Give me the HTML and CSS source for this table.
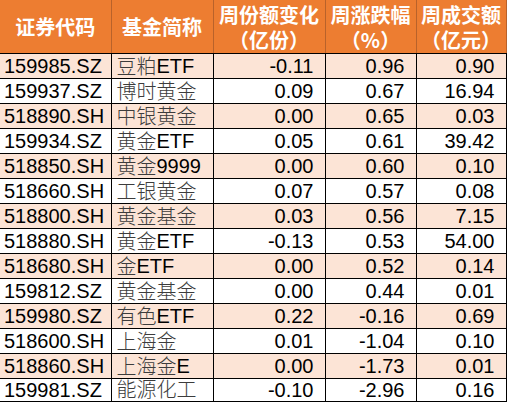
FILE: index.html
```html
<!DOCTYPE html>
<html lang="zh-CN">
<head>
    <meta charset="UTF-8">
    <title>黄金ETF周数据</title>
    <link rel="stylesheet" href="styles.css">
</head>
<body>
    <table class="fund-table">
        <colgroup>
            <col class="col-code">
            <col class="col-name">
            <col class="col-share">
            <col class="col-change">
            <col class="col-volume">
        </colgroup>
        <thead>
            <tr>
                <th>证券代码</th>
                <th>基金简称</th>
                <th><span class="line">周份额变化</span><span class="line"><span class="open">（</span>亿份<span class="close">）</span></span></th>
                <th><span class="line">周涨跌幅</span><span class="line"><span class="open">（</span>%<span class="close">）</span></span></th>
                <th><span class="line">周成交额</span><span class="line"><span class="open">（</span>亿元<span class="close">）</span></span></th>
            </tr>
        </thead>
        <tbody>
            <tr class="odd"><td>159985.SZ</td><td><span class="cn">豆粕</span>ETF</td><td class="num">-0.11</td><td class="num">0.96</td><td class="num">0.90</td></tr>
            <tr><td>159937.SZ</td><td><span class="cn">博时黄金</span></td><td class="num">0.09</td><td class="num">0.67</td><td class="num">16.94</td></tr>
            <tr class="odd"><td>518890.SH</td><td><span class="cn">中银黄金</span></td><td class="num">0.00</td><td class="num">0.65</td><td class="num">0.03</td></tr>
            <tr><td>159934.SZ</td><td><span class="cn">黄金</span>ETF</td><td class="num">0.05</td><td class="num">0.61</td><td class="num">39.42</td></tr>
            <tr class="odd"><td>518850.SH</td><td><span class="cn">黄金</span>9999</td><td class="num">0.00</td><td class="num">0.60</td><td class="num">0.10</td></tr>
            <tr><td>518660.SH</td><td><span class="cn">工银黄金</span></td><td class="num">0.07</td><td class="num">0.57</td><td class="num">0.08</td></tr>
            <tr class="odd"><td>518800.SH</td><td><span class="cn">黄金基金</span></td><td class="num">0.03</td><td class="num">0.56</td><td class="num">7.15</td></tr>
            <tr><td>518880.SH</td><td><span class="cn">黄金</span>ETF</td><td class="num">-0.13</td><td class="num">0.53</td><td class="num">54.00</td></tr>
            <tr class="odd"><td>518680.SH</td><td><span class="cn">金</span>ETF</td><td class="num">0.00</td><td class="num">0.52</td><td class="num">0.14</td></tr>
            <tr><td>159812.SZ</td><td><span class="cn">黄金基金</span></td><td class="num">0.00</td><td class="num">0.44</td><td class="num">0.01</td></tr>
            <tr class="odd"><td>159980.SZ</td><td><span class="cn">有色</span>ETF</td><td class="num">0.22</td><td class="num">-0.16</td><td class="num">0.69</td></tr>
            <tr><td>518600.SH</td><td><span class="cn">上海金</span></td><td class="num">0.01</td><td class="num">-1.04</td><td class="num">0.10</td></tr>
            <tr class="odd"><td>518860.SH</td><td><span class="cn">上海金</span>E</td><td class="num">0.00</td><td class="num">-1.73</td><td class="num">0.01</td></tr>
            <tr class="last"><td>159981.SZ</td><td><span class="cn">能源化工</span></td><td class="num">-0.10</td><td class="num">-2.96</td><td class="num">0.16</td></tr>
        </tbody>
    </table>
</body>
</html>
```

FILE: styles.css
```css
* {
    margin: 0;
    padding: 0;
    box-sizing: border-box;
}

body {
    background-color: #ffffff;
    font-family: "Liberation Sans", Arial, "Noto Sans CJK SC", sans-serif;
    color: #000;
}

.fund-table {
    border-collapse: collapse;
    table-layout: fixed;
    width: 506px;
}

.col-code { width: 111px; }
.col-name { width: 102px; }
.col-share { width: 112px; }
.col-change { width: 91px; }
.col-volume { width: 90px; }

.fund-table th {
    height: 53px;
    background-color: #ed7d31;
    color: #ffffff;
    font-family: "Noto Sans CJK SC", sans-serif;
    font-weight: 700;
    font-size: 20px;
    line-height: 25px;
    text-align: center;
    border-right: 1px solid #b9622a;
    border-bottom: 1px solid #000;
    padding-top: 1px;
}

.fund-table th .line {
    display: block;
}

/* full-width brackets, kept at one em each */
.open,
.close {
    display: inline-block;
    width: 1em;
}

.open { text-align: right; }
.close { text-align: left; }

.fund-table td {
    height: 25px;
    font-size: 20px;
    line-height: 22px;
    border-right: 1px solid #000;
    border-bottom: 1px solid #000;
    padding: 0 4px;
    white-space: nowrap;
}

.fund-table td:nth-child(2) {
    padding-left: 5px;
}

.fund-table tr.last td {
    height: 21px;
}

.fund-table tr.odd td {
    background-color: #fce4d6;
}

.fund-table td.num {
    text-align: right;
    padding-right: 11px;
}

.cn {
    display: inline-block;
    vertical-align: top;
    height: 22px;
    line-height: 22px;
    font-family: "Noto Sans CJK SC", sans-serif;
    font-weight: 300;
    color: #3c3c3c;
}

.fund-table tr.last .cn {
    height: 20px;
    line-height: 20px;
}
```
